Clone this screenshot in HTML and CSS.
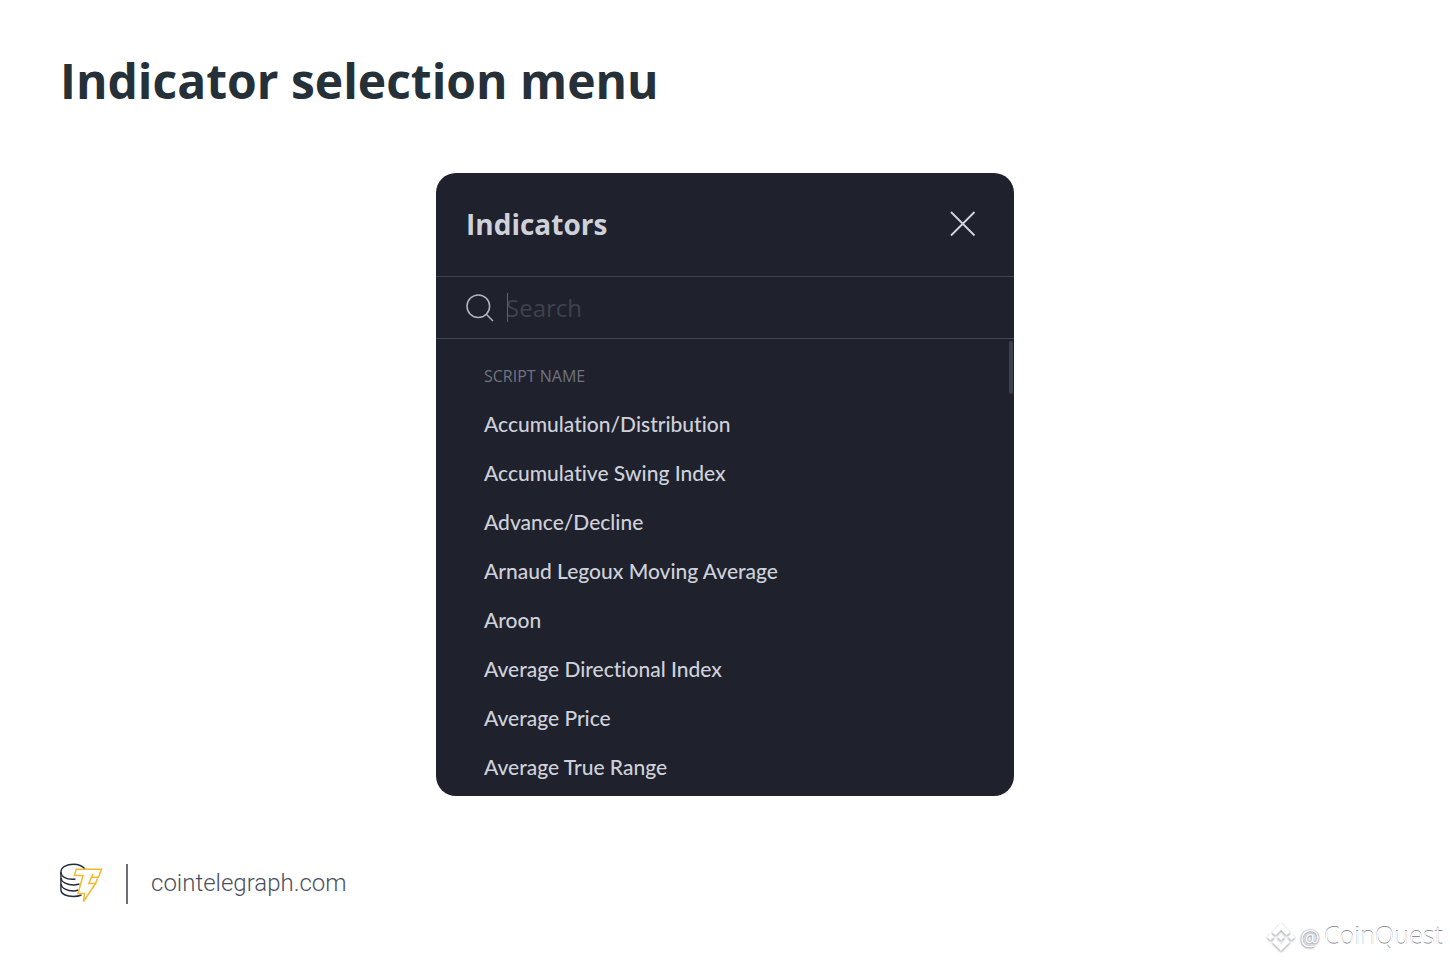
FILE: index.html
```html
<!DOCTYPE html>
<html lang="en">

<head>
    <meta charset="UTF-8">
    <meta name="viewport" content="width=device-width, initial-scale=1.0">
    <title>Indicator selection menu</title>
    <link rel="stylesheet" href="styles.css">
</head>

<body>
    <h1 class="title">Indicator selection menu</h1>

    <main class="panel">
        <div class="panel-head">
            <h2>Indicators</h2>
            <button class="close" type="button" aria-label="Close">
                <svg width="26" height="26" viewBox="0 0 26 26"><path d="M1 1L24.500 24.500M24.500 1L1 24.500"/></svg>
            </button>
        </div>
        <label class="search">
            <svg width="28" height="28" viewBox="0 0 28 28"><circle cx="12.3" cy="12.3" r="11.3"/><path d="M20.3 20.3L27 27"/></svg>
            <span class="caret"></span>
            <input type="text" placeholder="Search" aria-label="Search">
        </label>
        <div class="list">
            <h3>SCRIPT NAME</h3>
            <ul>
                <li><button type="button">Accumulation/Distribution</button></li>
                <li><button type="button">Accumulative Swing Index</button></li>
                <li><button type="button">Advance/Decline</button></li>
                <li><button type="button">Arnaud Legoux Moving Average</button></li>
                <li><button type="button">Aroon</button></li>
                <li><button type="button">Average Directional Index</button></li>
                <li><button type="button">Average Price</button></li>
                <li><button type="button">Average True Range</button></li>
            </ul>
            <span class="thumb"></span>
        </div>
    </main>

    <footer class="footer">
        <svg class="logo" width="44" height="42" viewBox="0 0 44 42">
            <g class="coins">
                <path d="M25 6C22.500 3 18 1.200 13.500 1.200C6.500 1.200 0.900 4.500 0.900 9C0.900 13.500 6 16.300 12.500 16.300C13.500 16.300 14.500 16.200 15.500 16"/>
                <path d="M0.900 9V27C0.900 31 6.500 33.500 13.500 33.500C16.500 33.500 19 33 21.500 32"/>
                <path d="M0.900 15C1.500 19.500 7.500 22 13.500 22C15.500 22 17.500 21.500 19.500 21"/>
                <path d="M0.900 21C1.500 25.500 7.500 28 13.500 28C15.500 28 17 27.500 18.500 27"/>
            </g>
            <path class="bolt" d="M16.300 6.200H41.500L38.500 14.200H31.500L28.800 20.500H35.500L23.500 38.500L24.500 30.500H18L23 12.500H14.300Z"/>
            <path class="bolt" d="M31.500 14.200L33 11M37.500 15.500L35.500 20.500"/>
        </svg>
        <span class="line"></span>
        <a href="#">cointelegraph.com</a>
    </footer>

    <div class="watermark">
        <svg width="30" height="30" viewBox="0 0 30 30">
            <path d="M15 1L24 10L20.500 13.500L15 8L9.500 13.500L6 10Z"/>
            <path d="M4.500 11.500L8 15L4.500 18.500L1 15Z"/>
            <path d="M15 11.500L18.500 15L15 18.500L11.500 15Z"/>
            <path d="M25.500 11.500L29 15L25.500 18.500L22 15Z"/>
            <path d="M15 29L24 20L20.500 16.500L15 22L9.500 16.500L6 20Z"/>
        </svg>
        <span class="at">@</span>
        <span class="name">CoinQuest</span>
    </div>
</body>

</html>
```
FILE: styles.css
```css
* {
    margin: 0;
    padding: 0;
    box-sizing: border-box;
}

body {
    position: relative;
    min-height: 100vh;
    padding: 48px 60px 56px;
    background-color: #fff;
    font-family: "Open Sans", sans-serif;
}

ul {
    list-style: none;
}

button {
    border: none;
    background: none;
    cursor: pointer;
}

svg {
    display: block;
    fill: none;
}

.title {
    font-size: 48px;
    line-height: 66px;
    color: #263038;
}

/* indicators dialog */

.panel {
    max-width: 578px;
    margin: 59px auto 0;
    padding-bottom: 5px;
    border-radius: 20px;
    overflow: hidden;
    background-color: #1f212d;
    color: #ced1da;
}

.panel-head {
    display: flex;
    align-items: center;
    justify-content: space-between;
    height: 104px;
    padding: 0 38px 2px 30px;
    border-bottom: 1px solid #41444e;
}

.panel-head h2 {
    font-size: 28px;
    line-height: 40px;
}

.close svg {
    stroke: #d3d6df;
    stroke-width: 1.8;
}

.search {
    position: relative;
    display: flex;
    align-items: center;
    gap: 12px;
    height: 62px;
    padding: 0 30px;
    border-bottom: 1px solid #41474f;
}

.search svg {
    stroke: #b2b5be;
    stroke-width: 1.5;
}

.search input {
    flex: 1;
    border: none;
    outline: none;
    background: none;
    font: 24px "Open Sans", sans-serif;
    color: #ced1da;
}

.search input::placeholder {
    color: #3f424d;
}

.caret {
    position: absolute;
    left: 71px;
    top: 16px;
    width: 1px;
    height: 29px;
    background-color: #60636d;
}

.list {
    position: relative;
    padding: 25px 48px 0;
}

.list h3 {
    margin-bottom: 11px;
    font-size: 16px;
    font-weight: 400;
    line-height: 24px;
    color: #6f737e;
}

.list button {
    display: block;
    width: 100%;
    font: 500 21px/49px Lato, sans-serif;
    font-variant-ligatures: none;
    text-align: left;
    color: #ced1da;
}

.thumb {
    position: absolute;
    top: 2px;
    right: 1px;
    width: 4px;
    height: 53px;
    border-radius: 2px;
    background-color: #3d414b;
}

/* source */

.footer {
    display: flex;
    align-items: center;
    margin-top: 67px;
}

.coins {
    stroke: #252b3a;
    stroke-width: 1.4;
}

.bolt {
    stroke: #f5b82e;
    stroke-width: 1.5;
}

.line {
    width: 2px;
    height: 40px;
    margin: 0 23px 0 22px;
    background-color: #6c6f7a;
}

.footer a {
    padding-bottom: 2px;
    font: 300 24px/38px Roboto, sans-serif;
    color: #4c505e;
    text-decoration: none;
}

/* white text that shows only by its shadow */

.watermark {
    position: absolute;
    right: 7px;
    bottom: 9px;
    display: flex;
    align-items: center;
    gap: 4px;
    line-height: 32px;
    color: #fff;
}

.watermark svg {
    fill: #fff;
    filter: drop-shadow(0 1px 1px #9295a5);
}

.at {
    font-size: 22px;
    text-shadow: 0 0 2px #777b8c, 0 1px 2px #9da0ae;
}

.name {
    padding-bottom: 4px;
    font-family: "Noto Sans", sans-serif;
    font-size: 25px;
    font-weight: 300;
    text-shadow: 0 -1px 0 #8a8c9a;
}
```
